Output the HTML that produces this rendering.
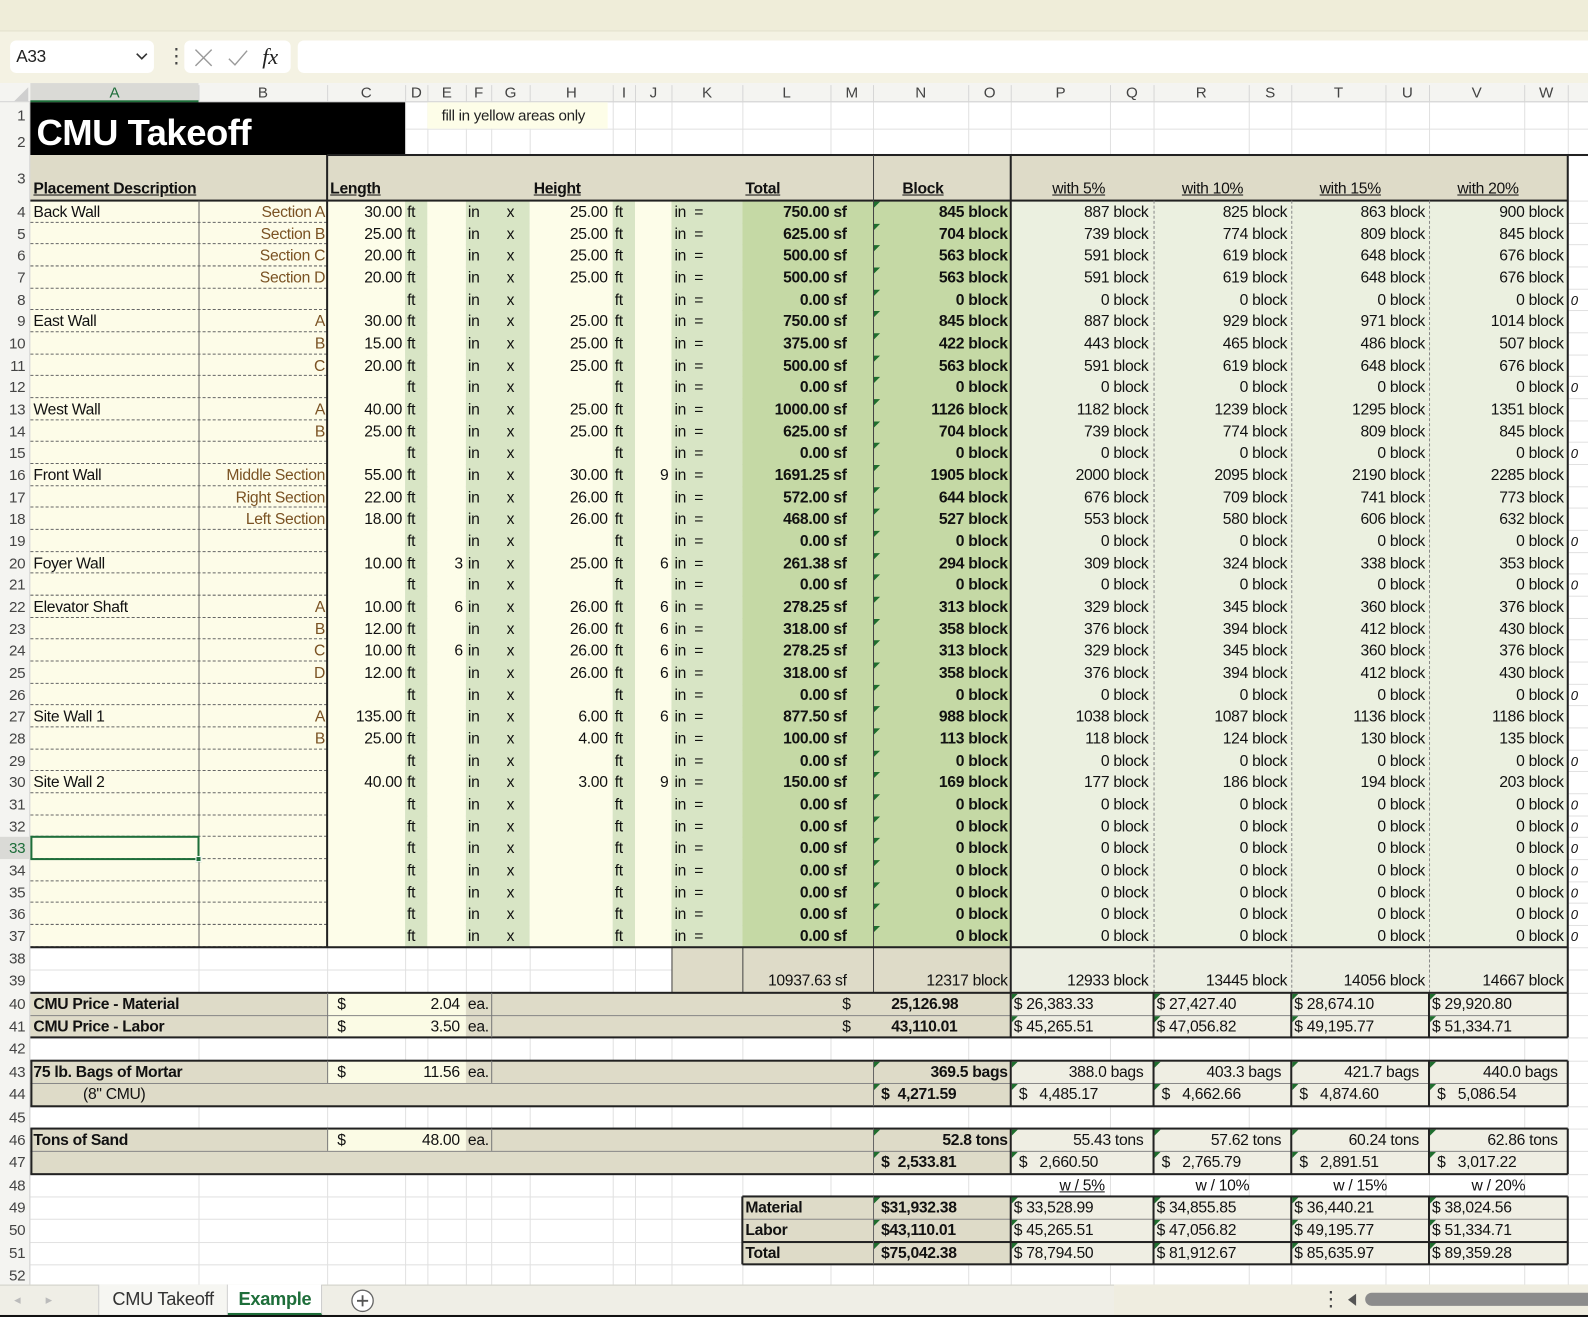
<!DOCTYPE html>
<html><head><meta charset="utf-8">
<style>
html,body{margin:0;padding:0;width:1588px;height:1317px;overflow:hidden;background:#fff;}
#w{position:absolute;left:0;top:0;width:1568px;height:1300px;transform:scale(1.01276,1.01308);transform-origin:0 0;font-family:"Liberation Sans",Arial,sans-serif;font-size:15.5px;color:#111;overflow:hidden;background:#fff;}
#w div{position:absolute;box-sizing:border-box;}
.t{white-space:nowrap;overflow:visible;letter-spacing:-0.3px;}
.tri{width:0;height:0;border-top:6px solid #1f6e2e;border-right:6px solid transparent;}
</style></head><body>
<div id="w"></div>
<script>
var H=[];
function add(s){H.push(s);}
var cols='ABCDEFGHIJKLMNOPQRSTUVWXY'.split('');
var ed=[30,196,323,400,422,460,485,523,605,627,663,733,820,862,956,998,1096,1139,1233,1275,1368,1411,1505,1548,1568];
function cx(c){return ed[cols.indexOf(c)];}
function cr(c){return ed[cols.indexOf(c)+1];}
function rt(n){if(n==1)return 101;if(n==2)return 127;if(n==3)return 153;if(n<=38)return 198+(n-4)*21.67;return 935+(n-38)*22.36;}
function rb(n){return rt(n+1);}
function R(x,y,w,h,css){add('<div style="left:'+x+'px;top:'+y+'px;width:'+w+'px;height:'+h+'px;'+css+'"></div>');}
function F(c1,c2,r1,r2,bg){var x=cx(c1),y=rt(r1);R(x,y,cr(c2)-x,rb(r2)-y,'background:'+bg);}
function HL(x1,x2,y,th,col){R(x1,y-th/2,x2-x1,th,'background:'+(col||'#222'));}
function VL(x,y1,y2,th,col){R(x-th/2,y1,th,y2-y1,'background:'+(col||'#222'));}
function T(c1,c2,r,s,o){o=o||{};var x=cx(c1),w=cr(c2)-x,y=rt(r),h=rb(r)-y;
add('<div class="t" style="left:'+x+'px;top:'+y+'px;width:'+w+'px;height:'+h+'px;line-height:'+(h+2)+'px;text-align:'+(o.a||'left')+';padding:0 '+(o.pr==null?3:o.pr)+'px 0 '+(o.pl==null?3:o.pl)+'px;'+(o.b?'font-weight:bold;':'')+(o.u?'text-decoration:underline;':'')+(o.c?'color:'+o.c+';':'')+(o.s||'')+'">'+s+'</div>');}
function TX(x,y,w,h,s,css){add('<div class="t" style="left:'+x+'px;top:'+y+'px;width:'+w+'px;height:'+h+'px;line-height:'+h+'px;'+(css||'')+'">'+s+'</div>');}
function TRI(x,y){add('<div class="tri" style="left:'+(x+1)+'px;top:'+(y+1)+'px"></div>');}

R(0,0,1568,30,'background:#efedd9');
R(0,30,1568,52,'background:#f4f2e3;border-top:1px solid #e2dfca');
R(10,40,142,32,'background:#fff;border-radius:6px');
TX(16,40,60,32,'A33','font-size:17px;color:#222');
add('<svg style="position:absolute;left:133px;top:50px" width="14" height="12"><path d="M2 3 L7 8 L12 3" fill="none" stroke="#333" stroke-width="1.6"/></svg>');
TX(164,40,10,32,'&#8942;','font-size:20px;color:#444');
R(182,40,105,32,'background:#fff;border-radius:6px');
add('<svg style="position:absolute;left:190px;top:46px" width="90" height="22"><path d="M3 3 L19 19 M19 3 L3 19" stroke="#9a9a9a" stroke-width="1.4"/><path d="M36 12 L42 18 L54 4" fill="none" stroke="#9a9a9a" stroke-width="1.4"/></svg>');
TX(259,40,30,32,'<i>fx</i>','font-family:\'Liberation Serif\',serif;font-size:22px;color:#222');
R(294,40,1274,32,'background:#fff;border-radius:6px 0 0 6px');

R(0,82,1568,1186,'background:#fff');
for(var i=0;i<cols.length-1;i++){VL(ed[i+1],101,1268,1,'#e1e1e1');}
for(var n=1;n<=52;n++){if(n==1)continue;HL(30,1568,rt(n)+0.5,1,'#e1e1e1');}
HL(30,1568,rb(52),1,'#e1e1e1');
R(0,82,1568,19,'background:#f4f4f1;border-bottom:1px solid #cfcfcf');
R(30,82,166,19,'background:#dadad6;border-bottom:2px solid #1e6e3a');
add('<svg style="position:absolute;left:12px;top:86px" width="16" height="14"><path d="M16 0 L16 14 L2 14 Z" fill="#cfcfcf"/></svg>');
for(var i=0;i<23;i++){var c=cols[i];TX(ed[i],82,ed[i+1]-ed[i],19,c,'text-align:center;color:'+(c=='A'?'#1e6e3a':'#444')+';font-size:15px');VL(ed[i+1],84,101,1,'#d6d6d6');}
R(0,101,30,1167,'background:#f4f4f1;border-right:1px solid #cfcfcf');
R(0,rt(33),30,rb(33)-rt(33),'background:#dadad6');
for(var n=1;n<=52;n++){TX(0,rt(n),25,rb(n)-rt(n),''+n,'text-align:right;color:'+(n==33?'#1e6e3a':'#444')+';font-size:15px;line-height:'+(rb(n)-rt(n)+2)+'px');}

R(30,101,370,52,'background:#000');
TX(36,106,360,46,'CMU Takeoff','color:#fff;font-weight:bold;font-size:36px;letter-spacing:-0.5px;line-height:50px');
R(422,101,178,26,'background:#fdfde8');
TX(436,101,170,26,'fill in yellow areas only','font-size:15px;color:#222;line-height:28px');

F('A','W',3,3,'#dedbc8');
var hy=rt(3)+23;
TX(33,hy,200,22,'Placement Description','font-weight:bold;text-decoration:underline');
TX(326,hy,80,22,'Length','font-weight:bold;text-decoration:underline');
TX(527,hy,80,22,'Height','font-weight:bold;text-decoration:underline');
TX(736,hy,80,22,'Total','font-weight:bold;text-decoration:underline');
TX(891,hy,80,22,'Block','font-weight:bold;text-decoration:underline');
TX(1039,hy,80,22,'with 5%','text-decoration:underline');
TX(1167,hy,80,22,'with 10%','text-decoration:underline');
TX(1303,hy,80,22,'with 15%','text-decoration:underline');
TX(1439,hy,80,22,'with 20%','text-decoration:underline');

F('A','B',4,37,'#fdfce8');F('C','C',4,37,'#fdfde9');F('D','D',4,37,'#d8e5c5');F('E','E',4,37,'#fdfde9');
F('F','G',4,37,'#d8e5c5');F('H','H',4,37,'#fdfde9');F('I','I',4,37,'#d8e5c5');F('J','J',4,37,'#fdfde9');
F('K','K',4,37,'#d8e5c5');F('L','M',4,37,'#c5d9a5');F('N','O',4,37,'#c5d9a5');F('P','W',4,37,'#ebf0e0');
for(var n=4;n<=37;n++){HL(30,323,rb(n)-0.5,1,'transparent;border-top:1px dashed #666');}
var D={4:['Back Wall','Section A','30.00','','25.00','','750.00','845','887','825','863','900'],
5:['','Section B','25.00','','25.00','','625.00','704','739','774','809','845'],
6:['','Section C','20.00','','25.00','','500.00','563','591','619','648','676'],
7:['','Section D','20.00','','25.00','','500.00','563','591','619','648','676'],
9:['East Wall','A','30.00','','25.00','','750.00','845','887','929','971','1014'],
10:['','B','15.00','','25.00','','375.00','422','443','465','486','507'],
11:['','C','20.00','','25.00','','500.00','563','591','619','648','676'],
13:['West Wall','A','40.00','','25.00','','1000.00','1126','1182','1239','1295','1351'],
14:['','B','25.00','','25.00','','625.00','704','739','774','809','845'],
16:['Front Wall','Middle Section','55.00','','30.00','9','1691.25','1905','2000','2095','2190','2285'],
17:['','Right Section','22.00','','26.00','','572.00','644','676','709','741','773'],
18:['','Left Section','18.00','','26.00','','468.00','527','553','580','606','632'],
20:['Foyer Wall','','10.00','3','25.00','6','261.38','294','309','324','338','353'],
22:['Elevator Shaft','A','10.00','6','26.00','6','278.25','313','329','345','360','376'],
23:['','B','12.00','','26.00','6','318.00','358','376','394','412','430'],
24:['','C','10.00','6','26.00','6','278.25','313','329','345','360','376'],
25:['','D','12.00','','26.00','6','318.00','358','376','394','412','430'],
27:['Site Wall 1','A','135.00','','6.00','6','877.50','988','1038','1087','1136','1186'],
28:['','B','25.00','','4.00','','100.00','113','118','124','130','135'],
30:['Site Wall 2','','40.00','','3.00','9','150.00','169','177','186','194','203']};
var brown='#7a5223';
for(var n=4;n<=37;n++){var d=D[n]||['','','','','','','0.00','0','0','0','0','0'];
 if(d[0])T('A','A',n,d[0]);
 if(d[1])T('B','B',n,d[1],{a:'right',pr:2,c:brown});
 if(d[2])T('C','C',n,d[2],{a:'right',pr:3});
 T('D','D',n,'ft',{pl:2});
 if(d[3])T('E','E',n,d[3],{a:'right',pr:3});
 T('F','F',n,'in',{pl:2});
 T('G','G',n,'x',{a:'center'});
 if(d[4])T('H','H',n,d[4],{a:'right',pr:5});
 T('I','I',n,'ft',{pl:2});
 if(d[5])T('J','J',n,d[5],{a:'right',pr:3});
 T('K','K',n,'in &nbsp;=',{pl:3});
 T('L','M',n,d[6]+' sf',{a:'right',pr:26,b:1});
 T('N','O',n,d[7]+' block',{a:'right',pr:3,b:1});
 T('P','Q',n,d[8]+' block',{a:'right',pr:5});
 T('R','S',n,d[9]+' block',{a:'right',pr:4});
 T('T','U',n,d[10]+' block',{a:'right',pr:4});
 T('V','W',n,d[11]+' block',{a:'right',pr:4});
 TRI(862,rt(n));
 if(d[11]=='0')T('X','X',n,'0',{s:'font-style:italic;font-size:13px'});
}
F('K','O',38,39,'#dedbc8');F('P','W',38,39,'#eceee2');
T('L','M',39,'10937.63 sf',{a:'right',pr:26});
T('N','O',39,'12317 block',{a:'right',pr:3});
T('P','Q',39,'12933 block',{a:'right',pr:5});
T('R','S',39,'13445 block',{a:'right',pr:4});
T('T','U',39,'14056 block',{a:'right',pr:4});
T('V','W',39,'14667 block',{a:'right',pr:4});
VL(663,935,rb(39),1,'#444');VL(733,935,rb(39),1,'#444');
HL(323,1568,153,2);HL(30,1548,198,2);
VL(323,153,935,2);VL(196,198,935,1,'#666');VL(862,153,rb(39),1,'#444');
VL(998,153,rb(39),2);VL(1548,153,rb(39),2);
for(var x of [1139,1275,1411]){R(x,198,1,rb(39)-198,'border-left:1px dashed #888');}
HL(30,1548,935,2);
F('A','B',40,41,'#dedbc8');F('C','E',40,41,'#fbfbe5');F('F','O',40,41,'#dedbc8');F('P','W',40,41,'#efeee3');
T('A','B',40,'CMU Price - Material',{b:1});T('A','B',41,'CMU Price - Labor',{b:1});
T('C','C',40,'$',{pl:10});T('C','E',40,'2.04',{a:'right',pr:6});T('F','F',40,'ea.',{pl:2});
T('C','C',41,'$',{pl:10});T('C','E',41,'3.50',{a:'right',pr:6});T('F','F',41,'ea.',{pl:2});
T('L','M',40,'$',{a:'right',pr:22});T('L','M',41,'$',{a:'right',pr:22});
T('N','O',40,'25,126.98',{b:1,pl:18});T('N','O',41,'43,110.01',{b:1,pl:18});
var pv=[['$ 26,383.33','$ 27,427.40','$ 28,674.10','$ 29,920.80'],['$ 45,265.51','$ 47,056.82','$ 49,195.77','$ 51,334.71']];
var grp=[['P','Q'],['R','S'],['T','U'],['V','W']];
for(var k=0;k<4;k++){T(grp[k][0],grp[k][1],40,pv[0][k]);T(grp[k][0],grp[k][1],41,pv[1][k]);TRI(cx(grp[k][0]),rt(40));TRI(cx(grp[k][0]),rt(41));}
HL(30,1548,rt(40),2);HL(30,1548,rt(41),1,'#888');HL(30,1548,rb(41),2);
VL(323,rt(40),rb(41),1,'#777');VL(485,rt(40),rb(41),1,'#777');
for(var x of [998,1139,1275,1411,1548])VL(x,rt(40),rb(41),2);
function block(r,lab,price,q,qa,c,ca,sub){
 F('A','O',r,r+1,'#dedbc8');F('C','E',r,r,'#fbfbe5');F('P','W',r,r+1,'#efeee3');
 T('A','B',r,lab,{b:1});if(sub)T('A','B',r+1,sub,{pl:52});
 T('C','C',r,'$',{pl:10});T('C','E',r,price,{a:'right',pr:6});T('F','F',r,'ea.',{pl:2});
 T('N','O',r,q,{a:'right',pr:3,b:1});T('N','O',r+1,'$ &nbsp;'+c,{b:1,pl:8});
 TRI(862,rt(r));TRI(862,rt(r+1));
 for(var k=0;k<4;k++){T(grp[k][0],grp[k][1],r,qa[k],{a:'right',pr:10});T(grp[k][0],grp[k][1],r+1,'$ &nbsp;&nbsp;'+ca[k],{pl:8});TRI(cx(grp[k][0]),rt(r));TRI(cx(grp[k][0]),rt(r+1));}
 HL(30,1548,rt(r),2);HL(30,1548,rt(r+1),1,'#888');HL(30,1548,rb(r+1),2);VL(31,rt(r),rb(r+1),1.5);
 VL(323,rt(r),rb(r),1,'#777');VL(485,rt(r),rb(r),1,'#777');VL(862,rt(r),rb(r+1),1,'#666');
 for(var x of [998,1139,1275,1411,1548])VL(x,rt(r),rb(r+1),2);
}
block(43,'75 lb. Bags of Mortar','11.56','369.5 bags',['388.0 bags','403.3 bags','421.7 bags','440.0 bags'],'4,271.59',['4,485.17','4,662.66','4,874.60','5,086.54'],'(8" CMU)');
block(46,'Tons of Sand','48.00','52.8 tons',['55.43 tons','57.62 tons','60.24 tons','62.86 tons'],'2,533.81',['2,660.50','2,765.79','2,891.51','3,017.22'],'');
T('P','Q',48,'w / 5%',{a:'center',u:1});T('R','S',48,'w / 10%',{a:'center'});T('T','U',48,'w / 15%',{a:'center'});T('V','W',48,'w / 20%',{a:'center'});
F('L','O',49,51,'#dedbc8');F('P','W',49,51,'#efeee3');
var sl=['Material','Labor','Total'],sv=['$31,932.38','$43,110.01','$75,042.38'];
var sp=[['$ 33,528.99','$ 34,855.85','$ 36,440.21','$ 38,024.56'],['$ 45,265.51','$ 47,056.82','$ 49,195.77','$ 51,334.71'],['$ 78,794.50','$ 81,912.67','$ 85,635.97','$ 89,359.28']];
for(var i=0;i<3;i++){var r=49+i;T('L','M',r,sl[i],{b:1,pl:3});T('N','O',r,sv[i],{b:1,pl:8});TRI(862,rt(r));
 for(var k=0;k<4;k++){T(grp[k][0],grp[k][1],r,sp[i][k]);TRI(cx(grp[k][0]),rt(r));}}
HL(733,1548,rt(49),2);HL(733,1548,rt(50),1,'#888');HL(733,1548,rt(51),2);HL(733,1548,rb(51),2);
VL(733,rt(49),rb(51),2);VL(862,rt(49),rb(51),1,'#666');
for(var x of [998,1139,1275,1411,1548])VL(x,rt(49),rb(51),2);
R(30,rt(33)-1,167,rb(33)-rt(33)+2,'border:2px solid #1e6e3a');
R(193,rb(33)-3,6,6,'background:#1e6e3a;border:1px solid #fff');

R(0,1268,1568,32,'background:#efeee6;border-top:1px solid #d0d0c8');
R(1100,1268,468,32,'background:#efede0');
TX(14,1268,20,30,'&#9666;','color:#bbb;font-size:13px');TX(45,1268,20,30,'&#9656;','color:#bbb;font-size:13px');
R(97,1268,128,30,'background:#f6f6f2;border-left:1px solid #ccc;border-right:1px solid #ccc');
TX(97,1268,128,30,'CMU Takeoff','text-align:center;font-size:18px;color:#333;line-height:29px');
R(225,1268,93,30,'background:#fff;border-bottom:2px solid #1e6e3a;border-right:1px solid #ccc');
TX(225,1268,93,29,'Example','text-align:center;font-size:18px;font-weight:bold;color:#1e6e3a;line-height:29px');
add('<svg style="position:absolute;left:346px;top:1272px" width="24" height="24"><circle cx="12" cy="12" r="10.5" fill="#fff" stroke="#666" stroke-width="1.3"/><path d="M12 6.5 V17.5 M6.5 12 H17.5" stroke="#555" stroke-width="1.8"/></svg>');
TX(1304,1268,12,30,'&#8942;','font-size:20px;color:#444');
add('<svg style="position:absolute;left:1328px;top:1276px" width="14" height="14"><path d="M11 1 L3 7 L11 13 Z" fill="#555"/></svg>');
R(1348,1276,220,13,'background:#8c8c8c;border-radius:7px 0 0 7px');
R(0,1298,1568,3,'background:#111');

document.getElementById('w').innerHTML=H.join('');
</script>
</body></html>
